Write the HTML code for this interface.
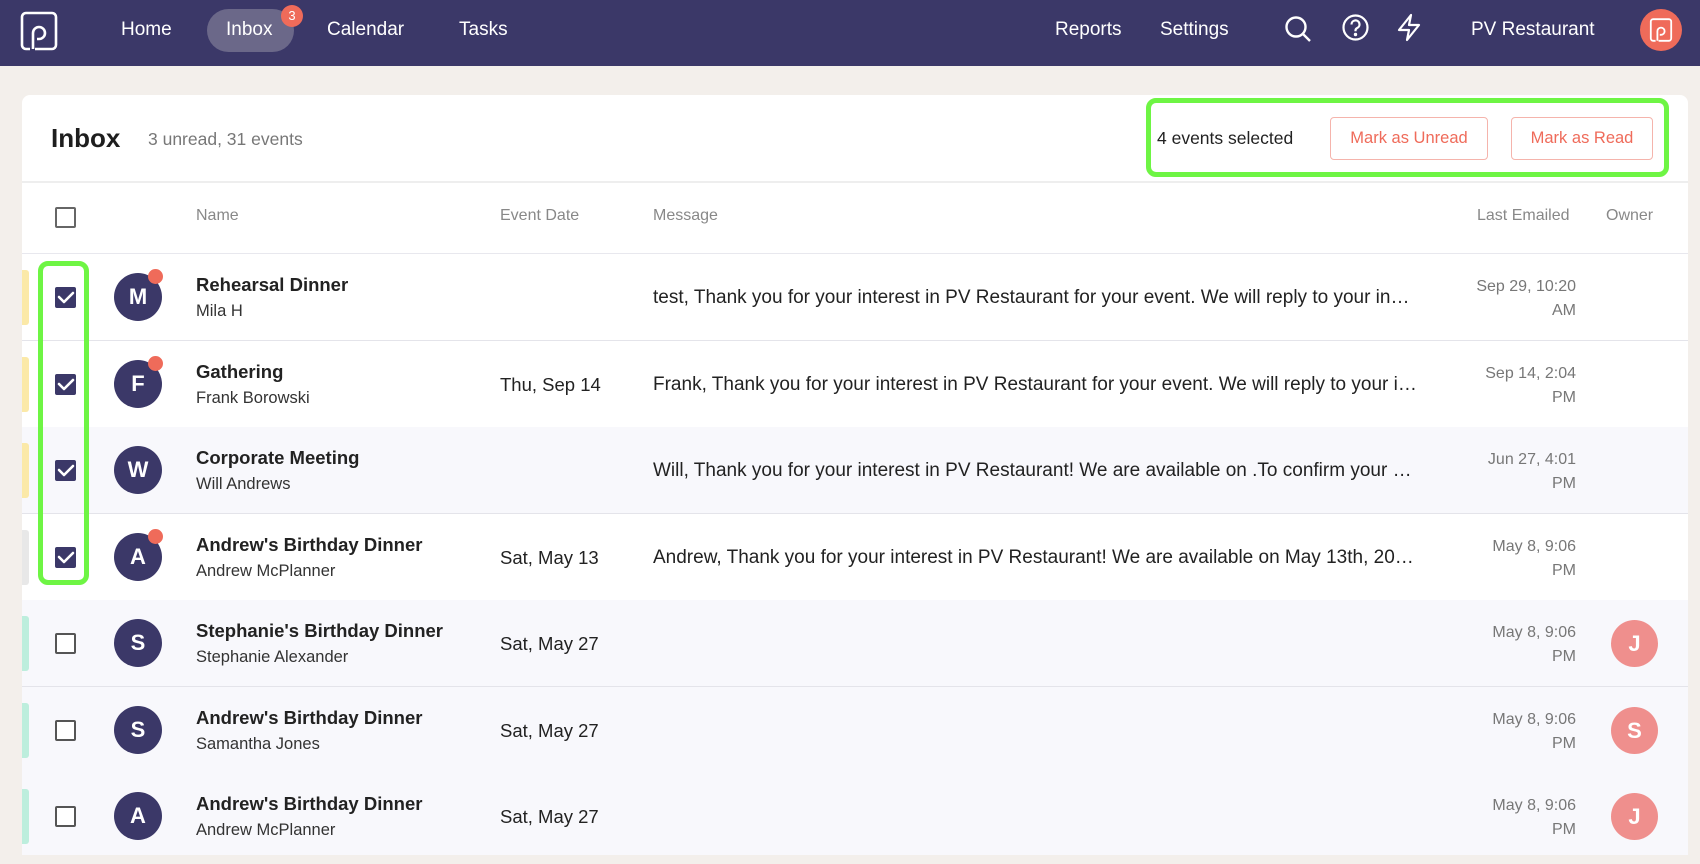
<!DOCTYPE html>
<html><head><meta charset="utf-8"><style>
*{box-sizing:border-box;margin:0;padding:0}
body{width:1700px;height:864px;overflow:hidden;background:#f3efeb;font-family:"Liberation Sans",sans-serif;position:relative;color:#222}
.nav{position:absolute;left:0;top:0;width:1700px;height:66px;background:#3b3868;color:#fff}
.nav .t{position:absolute;top:19px;font-size:19px}
.pill{position:absolute;left:207px;top:9px;width:87px;height:43px;border-radius:22px;background:#6b6889}
.badge{position:absolute;left:281px;top:5px;width:22px;height:22px;border-radius:50%;background:#ef6b5a;font-size:13px;text-align:center;line-height:22px;color:#fff}
.card{position:absolute;left:22px;top:95px;width:1666px;height:760px;background:#fff;border-radius:8px;overflow:hidden}
.hdr{position:absolute;left:0;top:0;width:100%;height:88px;border-bottom:2px solid #eeeeee}
.row{position:absolute;left:0;width:100%;height:87px;border-bottom:1px solid #e4e4ea}
.alt{background:#f8f8fc}
.bar{position:absolute;left:0;top:16px;width:7px;height:55px;border-radius:0 3px 3px 0}
.cb{position:absolute;left:33px;top:33px;width:21px;height:21px;border:2px solid #555;border-radius:2px;background:#fff}
.cb.on{background:#3b3868;border-color:#3b3868}
.av{position:absolute;left:92px;top:19px;width:48px;height:48px;border-radius:50%;background:#3b3868;color:#fff;font-weight:bold;font-size:22px;text-align:center;line-height:48px}
.dot{position:absolute;left:126px;top:15px;width:15px;height:15px;border-radius:50%;background:#ef6b5a}
.nm{position:absolute;left:174px;top:20px;font-size:18.5px;font-weight:600;color:#222}
.sub{position:absolute;left:174px;top:48px;font-size:16.5px;color:#333}
.dt{position:absolute;left:478px;top:33px;font-size:18.5px;color:#222}
.msg{position:absolute;left:631px;top:33px;font-size:19px;color:#222;width:766px;white-space:nowrap;overflow:hidden;text-overflow:ellipsis}
.le{position:absolute;right:112px;top:21px;font-size:16px;color:#777;text-align:right;line-height:24px}
.ow{position:absolute;left:1589px;top:20px;width:47px;height:47px;border-radius:50%;background:#ef8f8d;color:#fff;font-size:22px;font-weight:bold;text-align:center;line-height:47px}
.btn{position:absolute;top:117px;height:43px;border:1.5px solid #f5b4ac;border-radius:4px;color:#ef6b5a;font-size:16.5px;text-align:center;line-height:40px}
.g{position:absolute;border:5px solid #6ef544;border-radius:10px}
</style></head><body>
<div class="nav">
<svg style="position:absolute;left:20px;top:11px" width="38" height="40" viewBox="0 0 38 40" fill="none" stroke="#fff" stroke-width="2.6"><path d="M10 38H6a4 4 0 0 1-4-4V6a4 4 0 0 1 4-4h26a4 4 0 0 1 4 4v28a4 4 0 0 1-4 4H15"/><path d="M13 38V22a6 6 0 1 1 6 6h-2"/></svg>
<div class="pill"></div><div class="badge">3</div>
<div class="t" style="left:121px">Home</div>
<div class="t" style="left:226px">Inbox</div>
<div class="t" style="left:327px">Calendar</div>
<div class="t" style="left:459px">Tasks</div>
<div class="t" style="left:1055px">Reports</div>
<div class="t" style="left:1160px">Settings</div>
<svg style="position:absolute;left:1284px;top:15px" width="28" height="28" viewBox="0 0 28 28" fill="none" stroke="#fff" stroke-width="2.4"><circle cx="12" cy="12" r="9.5"/><path d="M19 19l7 7"/></svg>
<svg style="position:absolute;left:1341px;top:13px" width="29" height="29" viewBox="0 0 29 29" fill="none" stroke="#fff" stroke-width="2.2"><circle cx="14.5" cy="14.5" r="12"/><path d="M10.5 11.5a4 4 0 1 1 5.5 3.6c-1 .5-1.5 1.2-1.5 2.4v.8"/><circle cx="14.5" cy="21.5" r="0.6" fill="#fff"/></svg>
<svg style="position:absolute;left:1396px;top:13px" width="26" height="29" viewBox="0 0 26 29" fill="none" stroke="#fff" stroke-width="2.2" stroke-linejoin="round"><path d="M15 2L3 17h10l-2 10 12-15H13z"/></svg>
<div class="t" style="left:1471px">PV Restaurant</div>
<div style="position:absolute;left:1640px;top:9px;width:42px;height:42px;border-radius:50%;background:#ef6b5a"></div>
<svg style="position:absolute;left:1649px;top:18px" width="24" height="24" viewBox="0 0 38 40" fill="none" stroke="#fff" stroke-width="3"><path d="M10 38H6a4 4 0 0 1-4-4V6a4 4 0 0 1 4-4h26a4 4 0 0 1 4 4v28a4 4 0 0 1-4 4H15"/><path d="M13 38V22a6 6 0 1 1 6 6h-2"/></svg>
</div>
<div class="card">
<div class="hdr">
<div style="position:absolute;left:29px;top:28px;font-size:26px;font-weight:bold;color:#1e1e1e">Inbox</div>
<div style="position:absolute;left:126px;top:34px;font-size:17.5px;color:#777">3 unread, 31 events</div>
<div style="position:absolute;left:1135px;top:33px;font-size:17.5px;color:#222">4 events selected</div>
</div>
<div style="position:absolute;left:0;top:88px;width:100%;height:71px;border-bottom:1px solid #e8e8ee">
<div class="cb" style="top:24px;border-color:#666"></div>
<div style="position:absolute;left:174px;top:24px;font-size:16px;color:#888">Name</div>
<div style="position:absolute;left:478px;top:24px;font-size:16px;color:#888">Event Date</div>
<div style="position:absolute;left:631px;top:24px;font-size:16px;color:#888">Message</div>
<div style="position:absolute;left:1455px;top:24px;font-size:16px;color:#888">Last Emailed</div>
<div style="position:absolute;left:1584px;top:24px;font-size:16px;color:#888">Owner</div>
</div>
</div>
<div class="btn" style="left:1330px;width:158px">Mark as Unread</div>
<div class="btn" style="left:1511px;width:142px">Mark as Read</div>
<div id="rows" style="position:absolute;left:22px;top:254px;width:1666px;height:601px;overflow:hidden">
<div class="row" style="top:0"><div class="bar" style="background:#fbe9a8"></div><div class="cb on"></div><div class="av">M</div><div class="dot"></div><div class="nm">Rehearsal Dinner</div><div class="sub">Mila H</div><div class="msg">test, Thank you for your interest in PV Restaurant for your event. We will reply to your inquiry shortly.</div><div class="le">Sep 29, 10:20<br>AM</div></div>
<div class="row" style="top:87px"><div class="bar" style="background:#fbe9a8"></div><div class="cb on"></div><div class="av">F</div><div class="dot"></div><div class="nm">Gathering</div><div class="sub">Frank Borowski</div><div class="dt">Thu, Sep 14</div><div class="msg">Frank, Thank you for your interest in PV Restaurant for your event. We will reply to your inquiry.</div><div class="le">Sep 14, 2:04<br>PM</div></div>
<div class="row alt" style="top:173px"><div class="bar" style="background:#fbe9a8"></div><div class="cb on"></div><div class="av">W</div><div class="nm">Corporate Meeting</div><div class="sub">Will Andrews</div><div class="msg">Will, Thank you for your interest in PV Restaurant! We are available on .To confirm your booking</div><div class="le">Jun 27, 4:01<br>PM</div></div>
<div class="row" style="top:260px"><div class="bar" style="background:#e8e8e8"></div><div class="cb on"></div><div class="av">A</div><div class="dot"></div><div class="nm">Andrew's Birthday Dinner</div><div class="sub">Andrew McPlanner</div><div class="dt">Sat, May 13</div><div class="msg">Andrew, Thank you for your interest in PV Restaurant! We are available on May 13th, 2023 for</div><div class="le">May 8, 9:06<br>PM</div></div>
<div class="row alt" style="top:346px"><div class="bar" style="background:#bdeedd"></div><div class="cb"></div><div class="av">S</div><div class="nm">Stephanie's Birthday Dinner</div><div class="sub">Stephanie Alexander</div><div class="dt">Sat, May 27</div><div class="le">May 8, 9:06<br>PM</div><div class="ow">J</div></div>
<div class="row alt" style="top:433px"><div class="bar" style="background:#bdeedd"></div><div class="cb"></div><div class="av">S</div><div class="nm">Andrew's Birthday Dinner</div><div class="sub">Samantha Jones</div><div class="dt">Sat, May 27</div><div class="le">May 8, 9:06<br>PM</div><div class="ow">S</div></div>
<div class="row alt" style="top:519px"><div class="bar" style="background:#bdeedd"></div><div class="cb"></div><div class="av">A</div><div class="nm">Andrew's Birthday Dinner</div><div class="sub">Andrew McPlanner</div><div class="dt">Sat, May 27</div><div class="le">May 8, 9:06<br>PM</div><div class="ow">J</div></div>
</div>
<svg style="position:absolute;left:0;top:0;pointer-events:none" width="1700" height="864">
<g fill="none" stroke="#fff" stroke-width="2.6" stroke-linecap="round" stroke-linejoin="round">
<path d="M59 297l5 5 9-9"/><path d="M59 384l5 5 9-9"/><path d="M59 470l5 5 9-9"/><path d="M59 557l5 5 9-9"/>
</g></svg>
<div class="g" style="left:1146px;top:98px;width:523px;height:79px"></div>
<div class="g" style="left:38px;top:261px;width:51px;height:324px"></div>
</body></html>
